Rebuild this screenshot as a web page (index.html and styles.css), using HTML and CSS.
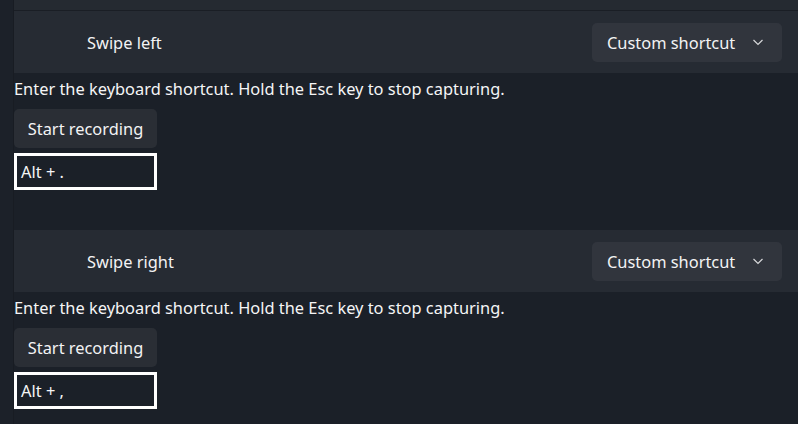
FILE: index.html
```html
<!DOCTYPE html>
<html>
<head>
<meta charset="utf-8">
<link rel="stylesheet" href="styles.css">
</head>
<body>
<div class="strip"></div>
<main class="main">
  <div class="card-tail"></div>
  <section class="group">
    <div class="card">
      <span class="label">Swipe left</span>
      <div class="dropdown"><span>Custom shortcut</span>
        <svg class="chev" width="12" height="12" viewBox="0 0 12 12"><path d="M1.5 4 L6 8.5 L10.5 4" fill="none" stroke="#d6d7d9" stroke-width="1.2"/></svg>
      </div>
    </div>
    <p class="hint">Enter the keyboard shortcut. Hold the Esc key to stop capturing.</p>
    <button class="btn">Start recording</button>
    <div class="keybox">Alt + .</div>
  </section>
  <section class="group">
    <div class="card">
      <span class="label">Swipe right</span>
      <div class="dropdown"><span>Custom shortcut</span>
        <svg class="chev" width="12" height="12" viewBox="0 0 12 12"><path d="M1.5 4 L6 8.5 L10.5 4" fill="none" stroke="#d6d7d9" stroke-width="1.2"/></svg>
      </div>
    </div>
    <p class="hint">Enter the keyboard shortcut. Hold the Esc key to stop capturing.</p>
    <button class="btn">Start recording</button>
    <div class="keybox">Alt + ,</div>
  </section>
</main>
</body>
</html>
```
FILE: styles.css
```css
html, body {
  margin: 0;
  height: 100%;
}
body {
  display: flex;
  background: #1c2129;
  font-family: "Noto Sans", "Open Sans", sans-serif;
  color: #ffffff;
  overflow: hidden;
}
.strip {
  width: 13px;
  flex: none;
  background: #1c2129;
  border-right: 1px solid #181c23;
}
.main {
  flex: 1;
  background: #1b2028;
  display: flex;
  flex-direction: column;
}
.main > * {
  flex: none;
}
.card-tail {
  height: 10px;
  background: #252a31;
  border-bottom: 1px solid #1a1e25;
}
.group {
  display: flex;
  flex-direction: column;
  align-items: flex-start;
}
.group + .group {
  margin-top: 40px;
}
.group > * {
  flex: none;
}
.card {
  align-self: stretch;
  height: 62px;
  background: #262b33;
  display: flex;
  align-items: center;
  justify-content: space-between;
  padding: 0 16px 0 73px;
}
.label {
  font-size: 16.4px;
  color: #f3f3f4;
}
.dropdown {
  width: 190px;
  height: 39px;
  box-sizing: border-box;
  background: #31353d;
  border-radius: 5px;
  display: flex;
  align-items: center;
  justify-content: space-between;
  padding: 0 18px 0 15px;
  font-size: 16.4px;
  color: #f3f3f4;
}
.chev {
  display: block;
}
.hint {
  margin: 0 0 5px;
  line-height: 31px;
  font-size: 16.4px;
  color: #f5f5f6;
}
.btn {
  width: 143px;
  height: 39px;
  background: #2a2e35;
  border: none;
  border-radius: 5px;
  color: #f3f3f4;
  font-family: inherit;
  font-size: 16.4px;
  padding: 0;
}
.keybox {
  margin-top: 5px;
  width: 143px;
  height: 37px;
  box-sizing: border-box;
  border: 3px solid #ffffff;
  background: #1b2028;
  display: flex;
  align-items: center;
  padding-left: 4px;
  font-size: 16.4px;
  color: #f5f5f6;
}
```
